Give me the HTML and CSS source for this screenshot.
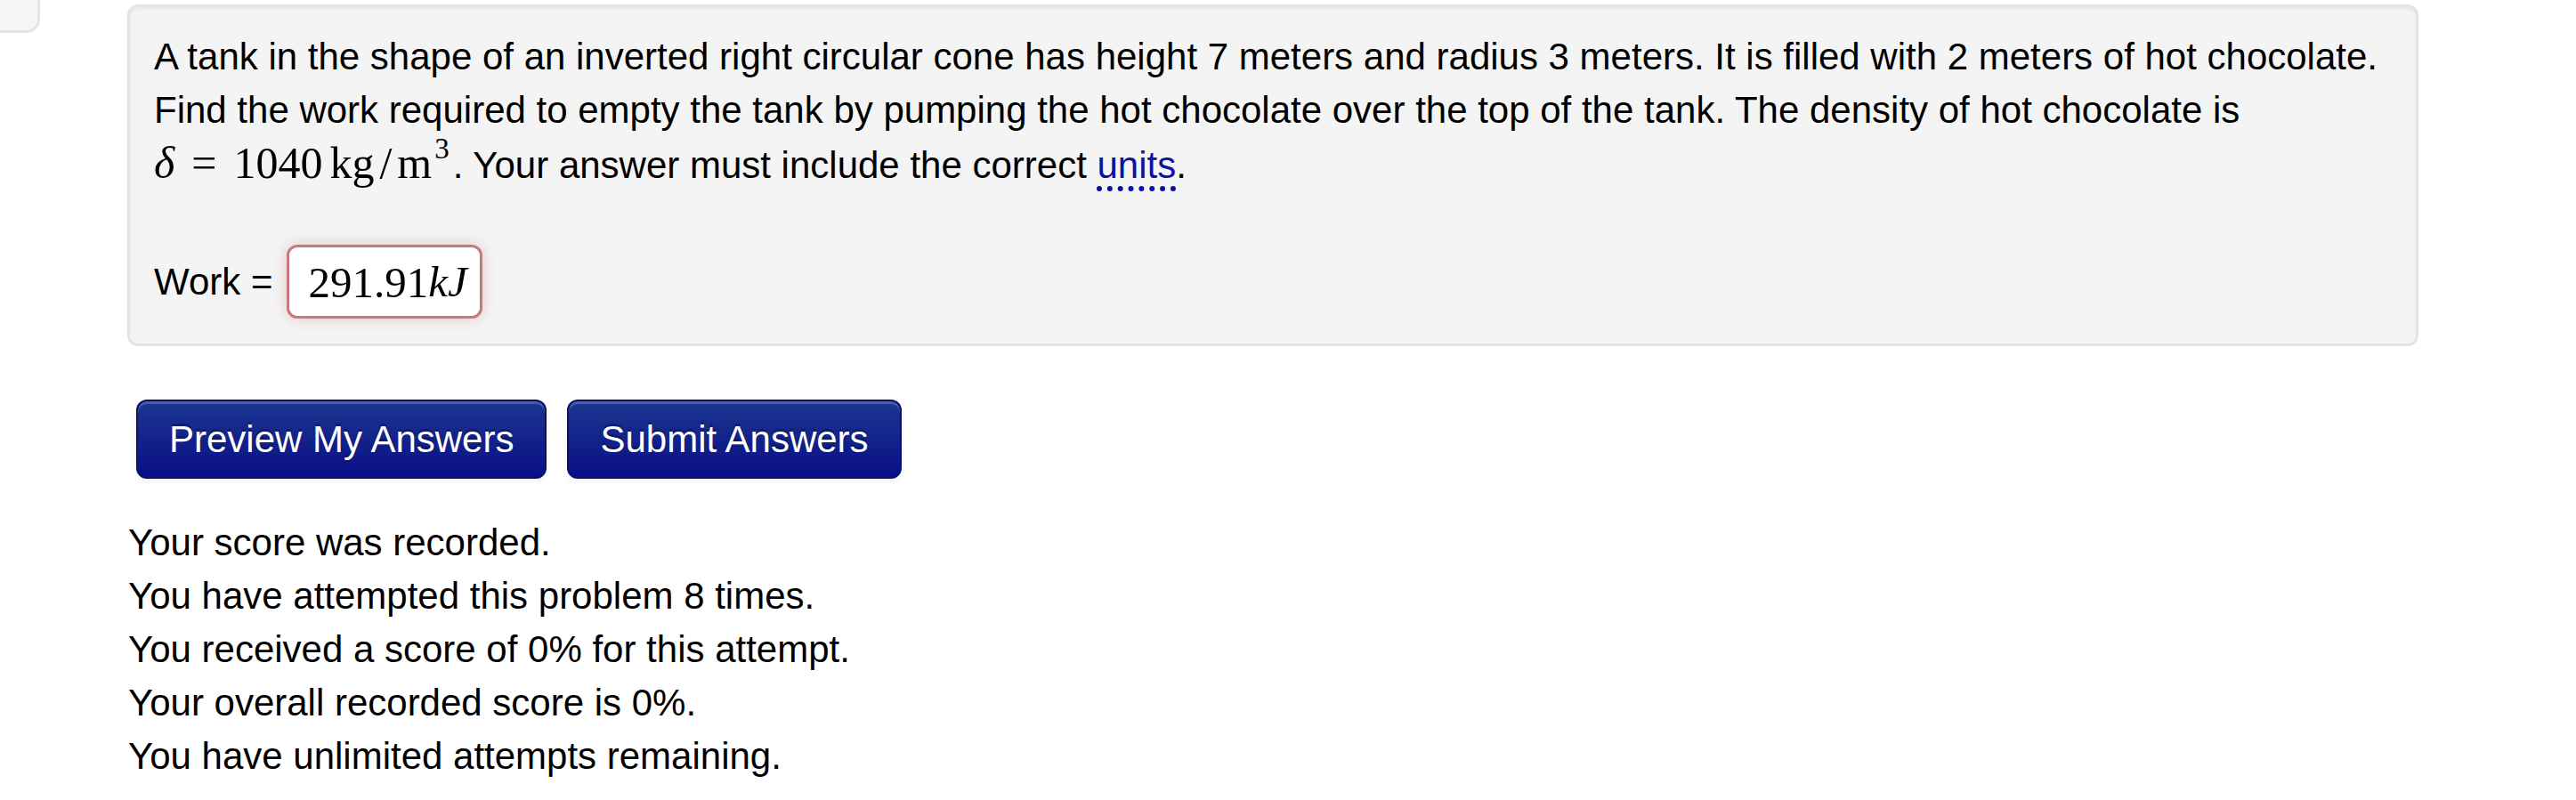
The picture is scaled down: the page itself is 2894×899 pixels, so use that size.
FILE: index.html
```html
<!DOCTYPE html>
<html lang="en">
<head>
<meta charset="utf-8">
<title>Problem</title>
<link rel="stylesheet" href="styles.css">
</head>
<body>
<div class="page">
  <div class="sidebar">
    <div class="nav-stub"></div>
  </div>
  <div class="main">
    <div class="problem">
      <p class="statement">A tank in the shape of an inverted right circular cone has height 7 meters and radius 3 meters. It is filled with 2 meters of hot chocolate. Find the work required to empty the tank by pumping the hot chocolate over the top of the tank. The density of hot chocolate is <span class="math"><i class="mi">δ</i><span class="mo">=</span><span class="mn">1040</span><span class="unit">kg</span><span class="slash">/</span><span class="unit-m">m</span><sup class="sup">3</sup></span>. Your answer must include the correct <a class="knowl" href="#">units</a>.</p>
      <div class="answer-row">
        <span class="label">Work =</span>
        <div class="answer-box"><span class="mn">291.91</span><i class="mi">kJ</i></div>
      </div>
    </div>
    <div class="buttons">
      <button class="btn" type="button">Preview My Answers</button>
      <button class="btn" type="button">Submit Answers</button>
    </div>
    <div class="score">
      <div>Your score was recorded.</div>
      <div>You have attempted this problem 8 times.</div>
      <div>You received a score of 0% for this attempt.</div>
      <div>Your overall recorded score is 0%.</div>
      <div>You have unlimited attempts remaining.</div>
    </div>
  </div>
</div>
</body>
</html>
```

FILE: styles.css
```css
html, body {
  margin: 0;
  padding: 0;
  background: #ffffff;
}

body {
  font-family: "Liberation Sans", Arial, Helvetica, sans-serif;
  font-size: 42px;
  line-height: 60px;
  color: #000000;
}

.page {
  display: flex;
  align-items: flex-start;
}

.sidebar {
  width: 143px;
  flex: none;
}

.nav-stub {
  width: 42px;
  height: 34px;
  background: #f5f5f5;
  border-right: 3px solid #e3e3e3;
  border-bottom: 3px solid #e3e3e3;
  border-bottom-right-radius: 15px;
}

.main {
  width: 2574px;
  padding-top: 5px;
  display: flex;
  flex-direction: column;
}

.problem {
  background: #f4f4f4;
  border: 3px solid #e3e3e3;
  border-radius: 12px;
  box-shadow: inset 0 3px 3px rgba(0, 0, 0, 0.05);
  padding: 26px 27px 28px 27px;
}

.statement {
  margin: 0;
}

.math {
  white-space: nowrap;
  font-family: "Liberation Serif", "Times New Roman", serif;
  font-size: 50px;
  line-height: 58px;
}

.mi {
  font-style: italic;
}

.mo {
  margin: 0 19px;
}

.unit {
  margin-left: 8px;
}

.slash {
  margin: 0 6px;
}

.unit-m {
  margin-right: 3px;
}

.sup {
  font-size: 33px;
  line-height: 0;
  vertical-align: 22px;
  margin-right: 4px;
}

.knowl {
  color: #0b13a3;
  text-decoration: none;
  border-bottom: 6px dotted #0b13a3;
}

.answer-row {
  display: flex;
  align-items: center;
  margin-top: 59px;
}

.answer-box {
  margin-left: 16px;
  box-sizing: border-box;
  width: 220px;
  height: 83px;
  border: 3px solid #c77b79;
  border-radius: 12px;
  background: #ffffff;
  box-shadow: 0 0 16px rgba(185, 74, 72, 0.28);
  display: flex;
  align-items: center;
  padding: 0 0 0 21px;
  font-family: "Liberation Serif", "Times New Roman", serif;
  font-size: 49px;
  line-height: 60px;
}

.answer-box .mn {
  padding-top: 2px;
}

.buttons {
  display: flex;
  gap: 23px;
  margin-top: 60px;
  padding-left: 10px;
}

.btn {
  font-family: "Liberation Sans", Arial, Helvetica, sans-serif;
  font-size: 42px;
  line-height: 61px;
  color: #ffffff;
  padding: 12px 35px;
  border: 2px solid #0a0f70;
  border-radius: 12px;
  background-color: #0d1a88;
  background-image: linear-gradient(to bottom, #1b3690 0%, #0a0f85 100%);
  box-shadow: inset 0 3px 0 rgba(255, 255, 255, 0.2), 0 3px 6px rgba(0, 0, 0, 0.06);
  text-shadow: 0 -3px 0 rgba(0, 0, 0, 0.25);
  cursor: pointer;
}

.score {
  margin-top: 42px;
  padding-left: 1px;
}
```
